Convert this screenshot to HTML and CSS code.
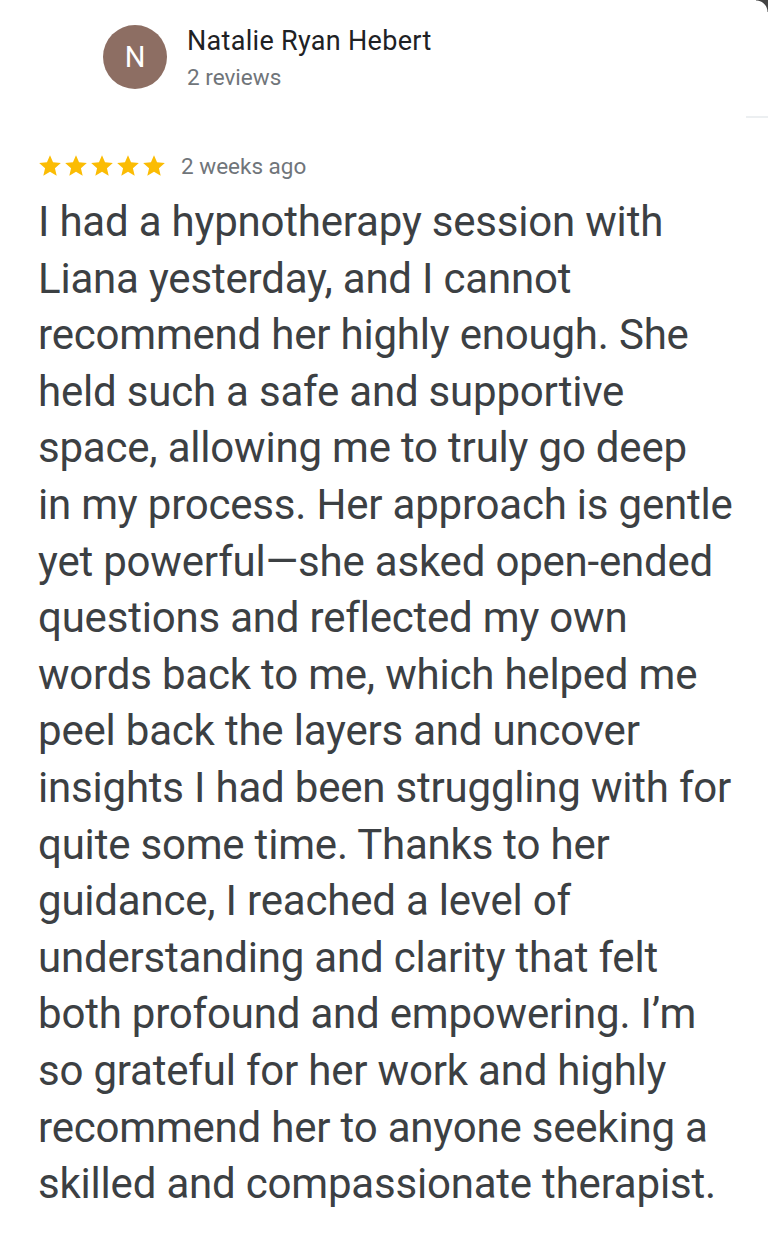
FILE: index.html
```html
<!DOCTYPE html>
<html>
<head>
<meta charset="utf-8">
<link rel="stylesheet" href="styles.css">
</head>
<body>
<div class="page">
  <div class="corner"></div>
  <div class="rule"></div>
  <header class="author">
    <div class="avatar">N</div>
    <div class="meta">
      <div class="name">Natalie Ryan Hebert</div>
      <div class="count">2 reviews</div>
    </div>
  </header>
  <div class="rating">
    <div class="stars">
      <svg viewBox="0 0 24 24" class="star"><path d="M12 17.27L18.18 21l-1.64-7.03L22 9.24l-7.19-.61L12 2 9.19 8.63 2 9.24l5.46 4.73L5.82 21z"/></svg>
      <svg viewBox="0 0 24 24" class="star"><path d="M12 17.27L18.18 21l-1.64-7.03L22 9.24l-7.19-.61L12 2 9.19 8.63 2 9.24l5.46 4.73L5.82 21z"/></svg>
      <svg viewBox="0 0 24 24" class="star"><path d="M12 17.27L18.18 21l-1.64-7.03L22 9.24l-7.19-.61L12 2 9.19 8.63 2 9.24l5.46 4.73L5.82 21z"/></svg>
      <svg viewBox="0 0 24 24" class="star"><path d="M12 17.27L18.18 21l-1.64-7.03L22 9.24l-7.19-.61L12 2 9.19 8.63 2 9.24l5.46 4.73L5.82 21z"/></svg>
      <svg viewBox="0 0 24 24" class="star"><path d="M12 17.27L18.18 21l-1.64-7.03L22 9.24l-7.19-.61L12 2 9.19 8.63 2 9.24l5.46 4.73L5.82 21z"/></svg>
    </div>
    <span class="when">2 weeks ago</span>
  </div>
  <p class="review">I had a hypnotherapy session with<br>Liana yesterday, and I cannot<br>recommend her highly enough. She<br>held such a safe and supportive<br>space, allowing me to truly go deep<br>in my process. Her approach is gentle<br>yet powerful—she asked open-ended<br>questions and reflected my own<br>words back to me, which helped me<br>peel back the layers and uncover<br>insights I had been struggling with for<br>quite some time. Thanks to her<br>guidance, I reached a level of<br>understanding and clarity that felt<br>both profound and empowering. I’m<br>so grateful for her work and highly<br>recommend her to anyone seeking a<br>skilled and compassionate therapist.</p>
</div>
</body>
</html>
```

FILE: styles.css
```css
* { box-sizing: border-box; }
html, body { margin: 0; padding: 0; background: #fff; }
body { font-family: Roboto, "Noto Sans", sans-serif; }
.page {
  position: relative;
  width: 768px;
  height: 1248px;
  overflow: hidden;
  padding: 26px 0 0 38px;
}
.corner {
  position: absolute;
  top: 0; right: 0;
  width: 12px; height: 12px;
  background: radial-gradient(circle at 0 100%, transparent 11px, #444 12px);
}
.rule {
  position: absolute;
  top: 116px; right: 0;
  width: 22px; height: 2px;
  background: #eceff1;
}
.author {
  display: flex;
  align-items: center;
  padding-left: 65px;
  gap: 20px;
}
.avatar {
  width: 64px; height: 64px;
  border-radius: 50%;
  background: #8d6e63;
  color: #fff;
  font-size: 29px;
  display: flex;
  align-items: center;
  justify-content: center;
  margin-top: -4px;
}
.meta { display: flex; flex-direction: column; }
.name { font-size: 27px; letter-spacing: 0.3px; color: #202124; line-height: 30px; }
.count { font-size: 22.5px; color: #70757a; line-height: 30px; margin-top: 6px; }
.rating {
  display: flex;
  align-items: center;
  margin-top: 59px;
  height: 30px;
}
.stars { display: flex; margin-left: -1px; }
.star { width: 26px; height: 26px; fill: #fbbc04; }
.when { font-size: 22.5px; color: #70757a; margin-left: 14px; }
.review {
  margin: 13px 0 0;
  font-size: 42px;
  letter-spacing: -0.2px;
  line-height: 56.6px;
  color: #3c4043;
  white-space: nowrap;
}
```
